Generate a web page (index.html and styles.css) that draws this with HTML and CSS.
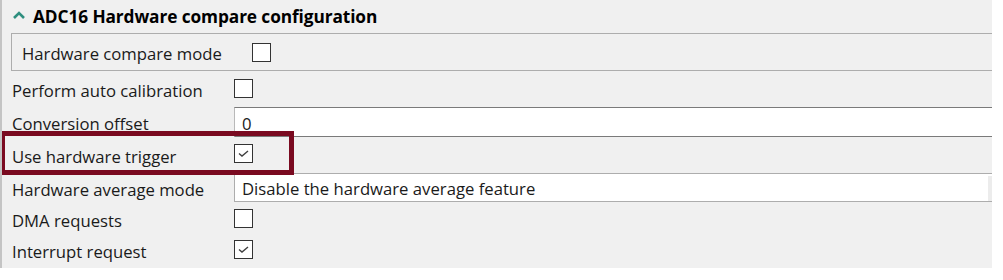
FILE: index.html
```html
<!DOCTYPE html>
<html>
<head>
<meta charset="utf-8">
<link rel="stylesheet" href="styles.css">
</head>
<body>
<div class="panel">
  <div class="header">
    <svg class="caret" width="12" height="8" viewBox="0 0 12 8"><path d="M1 7 L6 2 L11 7" fill="none" stroke="#2f8f7f" stroke-width="2.6"/></svg>
    <span class="title">ADC16 Hardware compare configuration</span>
  </div>
  <div class="group">
    <span class="label glabel">Hardware compare mode</span>
    <span class="cb"></span>
  </div>
  <div class="row r-cal">
    <span class="label">Perform auto calibration</span>
    <span class="cb"></span>
  </div>
  <div class="row r-off">
    <span class="label">Conversion offset</span>
    <div class="field input">0</div>
  </div>
  <div class="row r-trig">
    <span class="label">Use hardware trigger</span>
    <span class="cb checked"><svg width="17" height="17" viewBox="0 0 17 17"><path d="M4 8.5 L7 11 L13 6" fill="none" stroke="#404040" stroke-width="1.4"/></svg></span>
  </div>
  <div class="row r-avg">
    <span class="label">Hardware average mode</span>
    <div class="field select">Disable the hardware average feature<span class="strip"></span></div>
  </div>
  <div class="row r-dma">
    <span class="label">DMA requests</span>
    <span class="cb"></span>
  </div>
  <div class="row r-int">
    <span class="label">Interrupt request</span>
    <span class="cb checked"><svg width="17" height="17" viewBox="0 0 17 17"><path d="M4 8.5 L7 11 L13 6" fill="none" stroke="#404040" stroke-width="1.4"/></svg></span>
  </div>
  <div class="highlight"></div>
</div>
</body>
</html>
```
FILE: styles.css
```css
html, body {
  margin: 0;
  padding: 0;
  background: #ffffff;
}
body {
  font-family: "Open Sans", "Noto Sans", sans-serif;
  font-size: 16.7px;
  color: #1a1a1a;
}
.panel {
  position: relative;
  width: 990px;
  height: 268px;
  background: #f0f0f0;
  border-left: 2px solid #c4c4c4;
  overflow: hidden;
}
.header {
  height: 33px;
  display: flex;
  align-items: center;
  padding-left: 11px;
  box-sizing: border-box;
}
.caret {
  display: block;
  margin-right: 8px;
  margin-top: -3px;
}
.title {
  font-weight: 700;
  font-size: 17.3px;
  color: #000;
  letter-spacing: -0.1px;
}
.group {
  margin-left: 9px;
  height: 38px;
  box-sizing: border-box;
  border: 1px solid #adadad;
  border-right: none;
  display: flex;
  align-items: center;
  padding-left: 10px;
}
.row {
  display: flex;
  align-items: center;
  padding-left: 10px;
  box-sizing: border-box;
}
.label {
  width: 222px;
  flex: none;
  white-space: nowrap;
  padding-top: 3px;
}
.glabel { width: 230px; }
.cb {
  width: 17px;
  height: 17px;
  border: 1px solid #333;
  background: #fff;
  flex: none;
  display: block;
}
.cb svg { display: block; }
.r-cal { height: 36px; }
.r-cal .cb { margin-top: -2px; }
.r-off { height: 30px; }
.r-trig { height: 36px; }
.r-trig .cb { margin-top: -4px; }
.r-avg { height: 29px; }
.r-dma { height: 33px; }
.r-int { height: 33px; }
.r-int .label { padding-top: 0; }
.r-int .cb { margin-top: -4px; }
.field {
  flex: 1;
  align-self: stretch;
  background: #fff;
  box-sizing: border-box;
  padding-left: 7px;
  display: flex;
  align-items: center;
  position: relative;
  padding-top: 2px;
}
.input {
  border-top: 1px solid #7a7a7a;
  border-bottom: 1px solid #7a7a7a;
  border-left: 1px solid #b9b9b9;
}
.select {
  border-top: 1px solid #adadad;
  border-bottom: 1px solid #adadad;
  border-left: 1px solid #adadad;
}
.strip {
  position: absolute;
  right: 0;
  top: 2px;
  bottom: 0;
  width: 4px;
  background: #ececec;
}
.highlight {
  position: absolute;
  left: -2px;
  top: 131px;
  width: 294px;
  height: 44px;
  box-sizing: border-box;
  border: 5px solid #7a0a20;
}
```
